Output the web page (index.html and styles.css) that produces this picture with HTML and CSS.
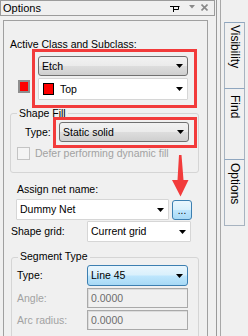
FILE: index.html
```html
<!DOCTYPE html>
<html>
<head>
<meta charset="utf-8">
<link rel="stylesheet" href="styles.css">
</head>
<body>
<div class="app">
  <div class="main">
    <div class="titlebar">
      <span class="title">Options</span>
      <span class="tb-icons">
        <svg class="ic-pin" width="10" height="7" viewBox="0 0 10 7"><path d="M0 1.5H9.5M3.5 1.5V7M3.5 4.5H8.5M8.5 1.5V4.5" stroke="#000" stroke-width="1" fill="none"/></svg>
        <svg class="ic-tri" width="6" height="4" viewBox="0 0 6 4"><polygon points="0,0 6,0 3,3.5" fill="#8a8a8a"/></svg>
        <svg class="ic-x" width="7" height="7" viewBox="0 0 7 7"><path d="M0.5 0.5L6.5 6.5M6.5 0.5L0.5 6.5" stroke="#8a8a8a" stroke-width="1.6"/></svg>
      </span>
    </div>
    <div class="panel">
      <div class="label lbl-active">Active Class and Subclass:</div>
      <div class="class-row">
        <div class="swatch"></div>
        <div class="class-combos">
          <div class="combo combo-btn combo-etch"><span class="ctext">Etch</span><svg class="dd" width="7" height="4" viewBox="0 0 7 4"><polygon points="0,0 7,0 3.5,4" fill="#000"/></svg></div>
          <div class="combo combo-white combo-top"><span class="redsq"></span><span class="ctext">Top</span><svg class="dd" width="7" height="4" viewBox="0 0 7 4"><polygon points="0,0 7,0 3.5,4" fill="#000"/></svg></div>
        </div>
      </div>
      <div class="group group-fill">
        <div class="legend">Shape Fill</div>
        <div class="row row-type">
          <span class="lbl lbl-type">Type:</span>
          <div class="combo combo-btn combo-static"><span class="ctext">Static solid</span><svg class="dd" width="7" height="4" viewBox="0 0 7 4"><polygon points="0,0 7,0 3.5,4" fill="#000"/></svg></div>
        </div>
        <div class="check-row">
          <span class="checkbox"></span>
          <span class="lbl disabled">Defer performing dynamic fill</span>
        </div>
      </div>
      <div class="label lbl-assign">Assign net name:</div>
      <div class="row row-net">
        <div class="combo combo-white combo-net"><span class="ctext">Dummy Net</span><svg class="dd" width="7" height="4" viewBox="0 0 7 4"><polygon points="0,0 7,0 3.5,4" fill="#000"/></svg></div>
        <div class="dots-btn">...</div>
      </div>
      <div class="row row-grid">
        <span class="lbl lbl-grid">Shape grid:</span>
        <div class="combo combo-white combo-grid"><span class="ctext">Current grid</span><svg class="dd" width="7" height="4" viewBox="0 0 7 4"><polygon points="0,0 7,0 3.5,4" fill="#000"/></svg></div>
      </div>
      <div class="group group-seg">
        <div class="legend">Segment Type</div>
        <div class="row seg-row seg-type">
          <span class="lbl lbl-seg">Type:</span>
          <div class="combo combo-focus combo-seg"><span class="ctext">Line 45</span><svg class="dd" width="7" height="4" viewBox="0 0 7 4"><polygon points="0,0 7,0 3.5,4" fill="#000"/></svg></div>
        </div>
        <div class="row seg-row">
          <span class="lbl lbl-seg disabled">Angle:</span>
          <div class="tbox">0.0000</div>
        </div>
        <div class="row seg-row">
          <span class="lbl lbl-seg disabled">Arc radius:</span>
          <div class="tbox">0.0000</div>
        </div>
      </div>
      <div class="hl hl-class"></div>
      <div class="hl hl-type"></div>
      <svg class="arrow" width="17" height="42" viewBox="0 0 17 42"><polygon points="7,0 9.5,0 11.5,25 16.5,25 8.5,41.5 0,25 5.5,25" fill="#f23b3b"/></svg>
    </div>
  </div>
  <div class="splitter"></div>
  <div class="tabs">
    <div class="tab tab-vis"><span class="tab-text">Visibility</span></div>
    <div class="tab tab-find"><span class="tab-text">Find</span></div>
    <div class="tab tab-opt"><span class="tab-text">Options</span></div>
  </div>
</div>
</body>
</html>
```

FILE: styles.css
```css
html, body {
  margin: 0;
  padding: 0;
}
body {
  width: 248px;
  height: 336px;
  overflow: hidden;
  background: #f0f0f0;
  font-family: "Liberation Sans", Arial, sans-serif;
  font-size: 10.5px;
  line-height: 13px;
  color: #000;
}
.app {
  display: flex;
  height: 336px;
}
.main {
  width: 215px;
  flex: none;
}
.titlebar {
  box-sizing: border-box;
  width: 215px;
  height: 16px;
  border: 1px solid #9c9c9c;
  display: flex;
  align-items: center;
  padding-left: 2px;
  line-height: 14px;
  font-size: 11px;
}
.tb-icons {
  margin-left: auto;
  display: flex;
  align-items: center;
}
.ic-pin { margin-right: 9px; margin-top: 1px; }
.ic-tri { margin-right: 6px; margin-top: -2px; }
.ic-x { margin-right: 6px; margin-top: -2px; }

.panel {
  position: relative;
  box-sizing: border-box;
  width: 205px;
  height: 316px;
  margin: 4px 0 0 3px;
  border: 1px solid #a0a0a0;
  border-bottom: none;
}
.label {
  height: 13px;
}
.lbl-active {
  margin: 17px 0 0 6px;
}
.class-row {
  display: flex;
  margin-top: 5px;
  padding-left: 14px;
}
.swatch {
  box-sizing: border-box;
  width: 12px;
  height: 13px;
  margin-top: 24px;
  margin-right: 8px;
  border: 2px solid #8e8e8e;
  background: #ff0000;
}
.class-combos {
  display: flex;
  flex-direction: column;
  gap: 2px;
  width: 150px;
}
.combo {
  box-sizing: border-box;
  display: flex;
  align-items: center;
  height: 20px;
  padding-left: 3px;
  border: 1px solid #707070;
}
.combo .dd {
  margin-left: auto;
  margin-right: 4px;
  flex: none;
}
.combo-btn {
  border-radius: 3px;
  background: linear-gradient(#f2f2f2 0%, #ebebeb 48%, #dddddd 52%, #cfcfcf 100%);
}
.combo-white {
  background: #fff;
  border-color: #d6d6d6;
  border-radius: 1px;
}
.combo-focus {
  border-radius: 3px;
  border-color: #3c7fb1;
  background: linear-gradient(#eaf6fd 0%, #d9f0fc 48%, #bee6fd 52%, #a7d9f5 100%);
}
.combo-top {
  height: 22px;
  padding-left: 4px;
}
.redsq {
  box-sizing: border-box;
  width: 11px;
  height: 12px;
  background: #ff0000;
  border: 1px solid #000;
  margin-right: 6px;
}
.group {
  box-sizing: border-box;
  border: 1px solid #d5d5d5;
  border-radius: 3px;
}
.group-fill {
  width: 189px;
  margin: 13px 0 0 6px;
  padding-bottom: 12px;
}
.legend {
  display: block;
  width: max-content;
  height: 13px;
  padding: 0 2px;
  background: #f0f0f0;
  margin-left: 6px;
}
.group-fill .legend {
  margin-top: -7px;
}
.row {
  display: flex;
  align-items: center;
}
.lbl {
  flex: none;
}
.disabled {
  color: #a2a2a2;
}
.row-type {
  margin-top: 2px;
  padding-left: 14px;
}
.lbl-type {
  width: 34px;
}
.combo-static {
  width: 130px;
}
.check-row {
  display: flex;
  align-items: center;
  margin-top: 5px;
  padding-left: 6px;
  height: 13px;
}
.checkbox {
  box-sizing: border-box;
  width: 13px;
  height: 13px;
  border: 1px solid #c4c4c4;
  background: #f4f4f4;
  margin-right: 5px;
}
.lbl-assign {
  margin: 10px 0 0 13px;
}
.row-net {
  margin-top: 3px;
  padding-left: 12px;
  gap: 3px;
}
.combo-net {
  width: 153px;
  height: 21px;
}
.dots-btn {
  box-sizing: border-box;
  width: 20px;
  height: 20px;
  margin-top: 1px;
  border: 1px solid #3c7fb1;
  border-radius: 3px;
  background: linear-gradient(#eaf6fd 0%, #d9f0fc 48%, #bee6fd 52%, #a7d9f5 100%);
  text-align: center;
  line-height: 20px;
  font-size: 10px;
}
.row-grid {
  margin-top: 1px;
  padding-left: 7px;
}
.lbl-grid {
  width: 76px;
}
.combo-grid {
  width: 104px;
  height: 21px;
}
.group-seg {
  width: 188px;
  margin: 15px 0 0 7px;
  padding-bottom: 10px;
}
.group-seg .legend {
  margin-top: -8px;
}
.seg-row {
  margin-top: 2px;
  padding-left: 5px;
}
.lbl-seg {
  width: 70px;
}
.combo-seg {
  width: 101px;
  height: 21px;
}
.tbox {
  box-sizing: border-box;
  width: 101px;
  height: 20px;
  padding-left: 3px;
  line-height: 18px;
  border: 1px solid #a9a9a9;
  box-shadow: inset 1px 1px 0 #dcdcdc;
  background: #f0f0f0;
  color: #6d6d6d;
}
.hl {
  position: absolute;
  box-sizing: border-box;
  border: 3px solid #f23b3b;
}
.hl-class {
  left: 28px;
  top: 28px;
  width: 165px;
  height: 59px;
}
.hl-type {
  left: 49px;
  top: 96px;
  width: 144px;
  height: 31px;
}
.arrow {
  position: absolute;
  left: 168px;
  top: 134px;
}
.splitter {
  flex: none;
  width: 3px;
  margin-left: 1px;
  border-left: 1px solid #9a9a9a;
  border-right: 1px solid #a8a8a8;
}
.tabs {
  flex: none;
  width: 27px;
  padding: 22px 0 0 3px;
  box-sizing: border-box;
}
.tab {
  box-sizing: border-box;
  width: 21px;
  border: 1px solid #a7b3c0;
  border-top-color: #8fa6bf;
  display: flex;
  justify-content: center;
}
.tab + .tab {
  border-top: 1px solid #8fa6bf;
  margin-top: -1px;
}
.tab-text {
  writing-mode: vertical-rl;
  font-size: 12px;
  line-height: 14px;
}
.tab-vis {
  height: 67px;
  padding-top: 2px;
}
.tab-find {
  height: 72px;
  padding-top: 6px;
}
.tab-opt {
  height: 67px;
  padding-top: 3px;
}
```
